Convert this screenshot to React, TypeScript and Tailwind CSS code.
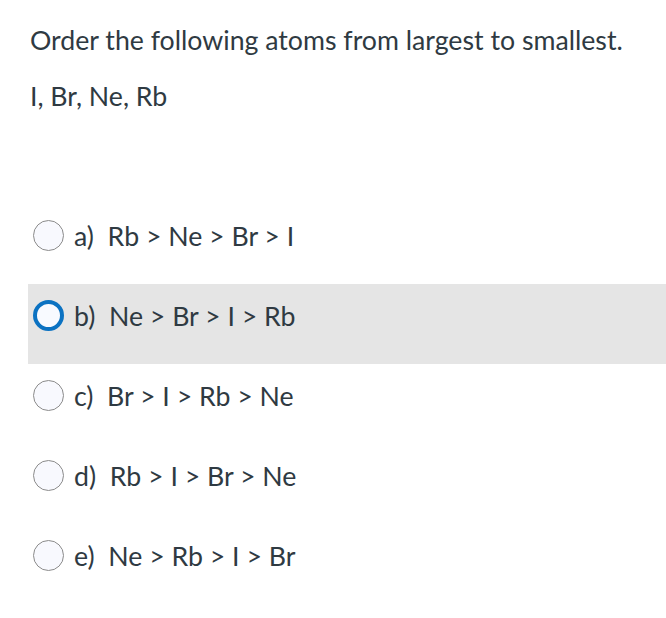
const options = [
  { key: 'a', text: 'Rb > Ne > Br > I' },
  { key: 'b', text: 'Ne > Br > I > Rb', selected: true },
  { key: 'c', text: 'Br > I > Rb > Ne' },
  { key: 'd', text: 'Rb > I > Br > Ne' },
  { key: 'e', text: 'Ne > Rb > I > Br' },
]

export default function App() {
  return (
    <div
      className="w-[666px] h-[618px] bg-white text-[#2f3a42] overflow-hidden"
      style={{ fontFamily: 'Lato, "Noto Sans", sans-serif' }}
    >
      <div className="pl-[30px] pt-[24px]">
        <p className="text-[26.7px] leading-[32px]">Order the following atoms from largest to smallest.</p>
        <p className="text-[26.7px] leading-[32px] mt-[24px]">I, Br, Ne, Rb</p>
      </div>

      <div className="ml-[28px] mt-[92px]">
        {options.map((o) => (
          <div
            key={o.key}
            className={`h-[80px] flex items-start pt-[16px] pl-[5px] ${o.selected ? 'bg-[#e5e5e5]' : ''}`}
          >
            {o.selected ? (
              <span className="w-[31px] h-[31px] rounded-full border-[4px] border-[#0b72c2] bg-[#f8faff] shrink-0" />
            ) : (
              <span className="w-[31px] h-[31px] rounded-full border border-[#8b8b8b] bg-[#f8f9fe] shrink-0" />
            )}
            <span className="ml-[10px] text-[26.7px] leading-[32px]">
              {o.key})&nbsp; {o.text}
            </span>
          </div>
        ))}
      </div>
    </div>
  )
}
